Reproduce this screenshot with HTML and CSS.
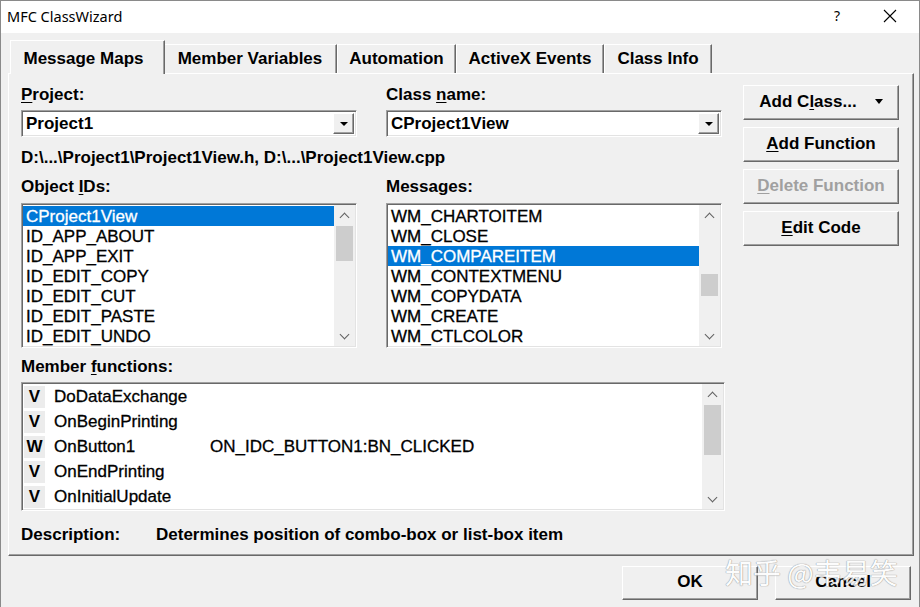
FILE: index.html
```html
<!DOCTYPE html>
<html lang="en">

<head>
  <meta charset="UTF-8">
  <title>MFC ClassWizard</title>
  <link rel="stylesheet" href="styles.css">
</head>

<body>
  <div class="window">
    <div class="titlebar">
      <span class="title">MFC ClassWizard</span>
      <span class="help">?</span>
      <svg class="close" width="14" height="14" viewBox="0 0 14 14">
        <path d="M1 1 L13 13 M13 1 L1 13" stroke="#000" stroke-width="1.1" fill="none"/>
      </svg>
    </div>

    <div class="dialog">
      <div class="tabs">
        <div class="tab active">Message Maps</div>
        <div class="tab tab-members">Member Variables</div>
        <div class="tab tab-auto">Automation</div>
        <div class="tab tab-activex">ActiveX Events</div>
        <div class="tab tab-info">Class Info</div>
      </div>

      <div class="panel">
        <div class="main">
          <div class="pair">
            <div class="field">
              <div class="label"><u>P</u>roject:</div>
              <div class="combo">
                <span class="combo-text">Project1</span>
                <span class="drop"><span class="tri"></span></span>
              </div>
            </div>
            <div class="field">
              <div class="label">Class <u>n</u>ame:</div>
              <div class="combo">
                <span class="combo-text">CProject1View</span>
                <span class="drop"><span class="tri"></span></span>
              </div>
            </div>
          </div>

          <div class="path">D:\...\Project1\Project1View.h, D:\...\Project1View.cpp</div>

          <div class="pair lists">
            <div class="field">
              <div class="label">Object <u>I</u>Ds:</div>
              <div class="list">
                <div class="rows">
                  <div class="row selected">CProject1View</div>
                  <div class="row">ID_APP_ABOUT</div>
                  <div class="row">ID_APP_EXIT</div>
                  <div class="row">ID_EDIT_COPY</div>
                  <div class="row">ID_EDIT_CUT</div>
                  <div class="row">ID_EDIT_PASTE</div>
                  <div class="row">ID_EDIT_UNDO</div>
                </div>
                <div class="scrollbar">
                  <span class="arrow up"></span>
                  <div class="track"><div class="thumb thumb-ids"></div></div>
                  <span class="arrow down"></span>
                </div>
              </div>
            </div>
            <div class="field">
              <div class="label">Messages:</div>
              <div class="list">
                <div class="rows">
                  <div class="row">WM_CHARTOITEM</div>
                  <div class="row">WM_CLOSE</div>
                  <div class="row selected">WM_COMPAREITEM</div>
                  <div class="row">WM_CONTEXTMENU</div>
                  <div class="row">WM_COPYDATA</div>
                  <div class="row">WM_CREATE</div>
                  <div class="row">WM_CTLCOLOR</div>
                </div>
                <div class="scrollbar">
                  <span class="arrow up"></span>
                  <div class="track"><div class="thumb thumb-msgs"></div></div>
                  <span class="arrow down"></span>
                </div>
              </div>
            </div>
          </div>

          <div class="label members-label">Member <u>f</u>unctions:</div>
          <div class="list members">
            <div class="rows">
              <div class="mrow"><span class="kind">V</span><span class="fname">DoDataExchange</span></div>
              <div class="mrow"><span class="kind">V</span><span class="fname">OnBeginPrinting</span></div>
              <div class="mrow"><span class="kind">W</span><span class="fname">OnButton1</span><span class="fmap">ON_IDC_BUTTON1:BN_CLICKED</span></div>
              <div class="mrow"><span class="kind">V</span><span class="fname">OnEndPrinting</span></div>
              <div class="mrow"><span class="kind">V</span><span class="fname">OnInitialUpdate</span></div>
            </div>
            <div class="scrollbar">
              <span class="arrow up"></span>
              <div class="track"><div class="thumb thumb-members"></div></div>
              <span class="arrow down"></span>
            </div>
          </div>

          <div class="description">
            <span class="desc-label">Description:</span>
            <span>Determines position of combo-box or list-box item</span>
          </div>
        </div>

        <div class="side">
          <button class="button"><span>Add C<u>l</u>ass...</span><span class="tri small"></span></button>
          <button class="button"><span><u>A</u>dd Function</span></button>
          <button class="button disabled"><span><u>D</u>elete Function</span></button>
          <button class="button"><span><u>E</u>dit Code</span></button>
        </div>
      </div>

      <div class="footer">
        <button class="button wide">OK</button>
        <button class="button wide">Cancel</button>
        <div class="watermark">知乎 @韦易笑</div>
      </div>
    </div>
  </div>
</body>

</html>
```

FILE: styles.css
```css
* {
  box-sizing: border-box;
}

body {
  margin: 0;
  background: #f0f0f0;
  font-family: "Liberation Sans", Arial, sans-serif;
  color: #000;
}

u {
  text-decoration-thickness: 1px;
  text-underline-offset: 2px;
}

.window {
  width: 920px;
  height: 607px;
  border: 1px solid #8a8a8a;
  border-bottom: none;
  background: #f0f0f0;
  overflow: hidden;
}

.titlebar {
  display: flex;
  align-items: center;
  height: 32px;
  padding-left: 6px;
  background: #fff;
}

.title {
  flex: 1;
  font-family: "Noto Sans", sans-serif;
  font-size: 14.5px;
  margin-top: -2px;
}

.help {
  font-family: "Noto Sans", sans-serif;
  font-size: 14px;
  margin-right: 43px;
  margin-top: -3px;
}

.close {
  margin-right: 22px;
  margin-top: -2px;
}

/* tabs */

.tabs {
  display: flex;
  align-items: flex-end;
  padding: 7px 0 0 9px;
  height: 40px;
  position: relative;
  z-index: 2;
}

.tab {
  height: 29px;
  line-height: 28px;
  text-align: center;
  font-size: 17px;
  font-weight: bold;
  border-top: 1px solid #fff;
  border-left: 1px solid #fff;
  border-right: 1px solid #696969;
  box-shadow: inset -1px 0 #a0a0a0;
  white-space: nowrap;
}

.tab.active {
  width: 155px;
  height: 34px;
  padding: 4px 8px 0 0;
  margin-bottom: -1px;
  margin-right: -2px;
  background: #f0f0f0;
  position: relative;
  z-index: 3;
}

.tab-members {
  width: 174px;
}

.tab-auto {
  width: 119px;
}

.tab-activex {
  width: 148px;
}

.tab-info {
  width: 108px;
}

/* panel */

.panel {
  display: flex;
  margin-left: 7px;
  width: 906px;
  height: 483px;
  border-top: 1px solid #fff;
  border-left: 1px solid #fff;
  border-right: 1px solid #696969;
  border-bottom: 1px solid #696969;
  box-shadow: inset -1px -1px #a0a0a0;
  padding: 11px 0 0 12px;
  position: relative;
  z-index: 1;
}

.main {
  width: 704px;
}

.pair {
  display: flex;
  gap: 29px;
}

.field {
  width: 336px;
}

.label,
.path,
.description {
  font-size: 17px;
  font-weight: bold;
  line-height: 20px;
  white-space: nowrap;
}

.combo {
  display: flex;
  height: 27px;
  margin-top: 5px;
  background: #fff;
  border-top: 1px solid #a0a0a0;
  border-left: 1px solid #a0a0a0;
  border-right: 1px solid #fff;
  border-bottom: 1px solid #fff;
  box-shadow: inset 1px 1px #696969, inset -1px -1px #e3e3e3;
}

.combo-text {
  flex: 1;
  padding: 3px 0 0 4px;
  font-size: 17px;
  font-weight: bold;
  line-height: 20px;
}

.drop {
  display: flex;
  align-items: center;
  justify-content: center;
  width: 21px;
  margin: 2px 2px 2px 0;
  background: #f0f0f0;
  border-top: 1px solid #fff;
  border-left: 1px solid #fff;
  border-right: 1px solid #696969;
  border-bottom: 1px solid #696969;
  box-shadow: inset -1px -1px #a0a0a0;
}

.tri {
  width: 0;
  height: 0;
  border-left: 4px solid transparent;
  border-right: 4px solid transparent;
  border-top: 4px solid #000;
}

.path {
  margin-top: 11px;
}

.lists .label {
  margin-top: 9px;
}

/* list boxes */

.list {
  display: flex;
  height: 145px;
  margin-top: 6px;
  background: #fff;
  border-top: 1px solid #a0a0a0;
  border-left: 1px solid #a0a0a0;
  border-right: 1px solid #fff;
  border-bottom: 1px solid #fff;
  box-shadow: inset 1px 1px #696969, inset -1px -1px #e3e3e3;
  padding: 1px;
}

.rows {
  flex: 1;
  padding-top: 1px;
}

.row {
  height: 20px;
  line-height: 21px;
  padding-left: 3px;
  font-size: 17px;
  white-space: nowrap;
  -webkit-text-stroke: 0.3px #000;
}

.row.selected {
  background: #0078d7;
  color: #fff;
  -webkit-text-stroke: 0.3px #fff;
}

.scrollbar {
  display: flex;
  flex-direction: column;
  width: 21px;
  background: #f0f0f0;
}

.arrow {
  height: 20px;
  display: flex;
  align-items: center;
  justify-content: center;
}

.arrow::before {
  content: "";
  width: 6px;
  height: 6px;
  border-left: 1.5px solid #606060;
  border-top: 1.5px solid #606060;
  transform: translateY(2px) rotate(45deg);
}

.arrow.down::before {
  transform: translateY(-2px) rotate(225deg);
}

.track {
  flex: 1;
  position: relative;
}

.thumb {
  position: absolute;
  left: 2px;
  right: 2px;
  background: #cdcdcd;
}

.thumb-ids {
  top: 1px;
  height: 35px;
}

.thumb-msgs {
  top: 49px;
  height: 22px;
}

.thumb-members {
  top: 1px;
  height: 50px;
}

.members-label {
  margin-top: 9px;
}

.members {
  width: 704px;
  height: 129px;
  margin-top: 5px;
}

.members .rows {
  padding-top: 0;
}

.mrow {
  display: flex;
  align-items: center;
  height: 25px;
  font-size: 17px;
  white-space: nowrap;
  -webkit-text-stroke: 0.3px #000;
}

.kind {
  width: 21px;
  height: 22px;
  line-height: 22px;
  margin-left: 1px;
  text-align: center;
  font-weight: bold;
  background: #ececec;
  -webkit-text-stroke: 0;
}

.fname {
  width: 156px;
  margin-left: 9px;
}

.description {
  display: flex;
  margin-top: 14px;
}

.desc-label {
  width: 135px;
}

/* buttons */

.side {
  display: flex;
  flex-direction: column;
  gap: 7px;
  margin-left: 18px;
}

.button {
  display: flex;
  align-items: center;
  justify-content: center;
  gap: 18px;
  width: 156px;
  height: 35px;
  padding: 0 0 2px;
  font-family: "Liberation Sans", Arial, sans-serif;
  font-size: 17px;
  font-weight: bold;
  color: #000;
  background: #f0f0f0;
  border-top: 1px solid #fff;
  border-left: 1px solid #fff;
  border-right: 1px solid #696969;
  border-bottom: 1px solid #696969;
  box-shadow: inset -1px -1px #a0a0a0;
}

.button.disabled {
  color: #a0a0a0;
}

.tri.small {
  border-top-width: 5px;
}

/* footer */

.footer {
  display: flex;
  gap: 17px;
  padding: 10px 0 0 621px;
  position: relative;
}

.button.wide {
  width: 136px;
  height: 34px;
}

.watermark {
  position: absolute;
  left: 724px;
  top: -4px;
  font-family: "Noto Sans CJK SC", sans-serif;
  font-size: 28px;
  color: #fff;
  opacity: 0.85;
  text-shadow: 0 0 1px #888, 0 0 1px #888;
  white-space: nowrap;
}
```
